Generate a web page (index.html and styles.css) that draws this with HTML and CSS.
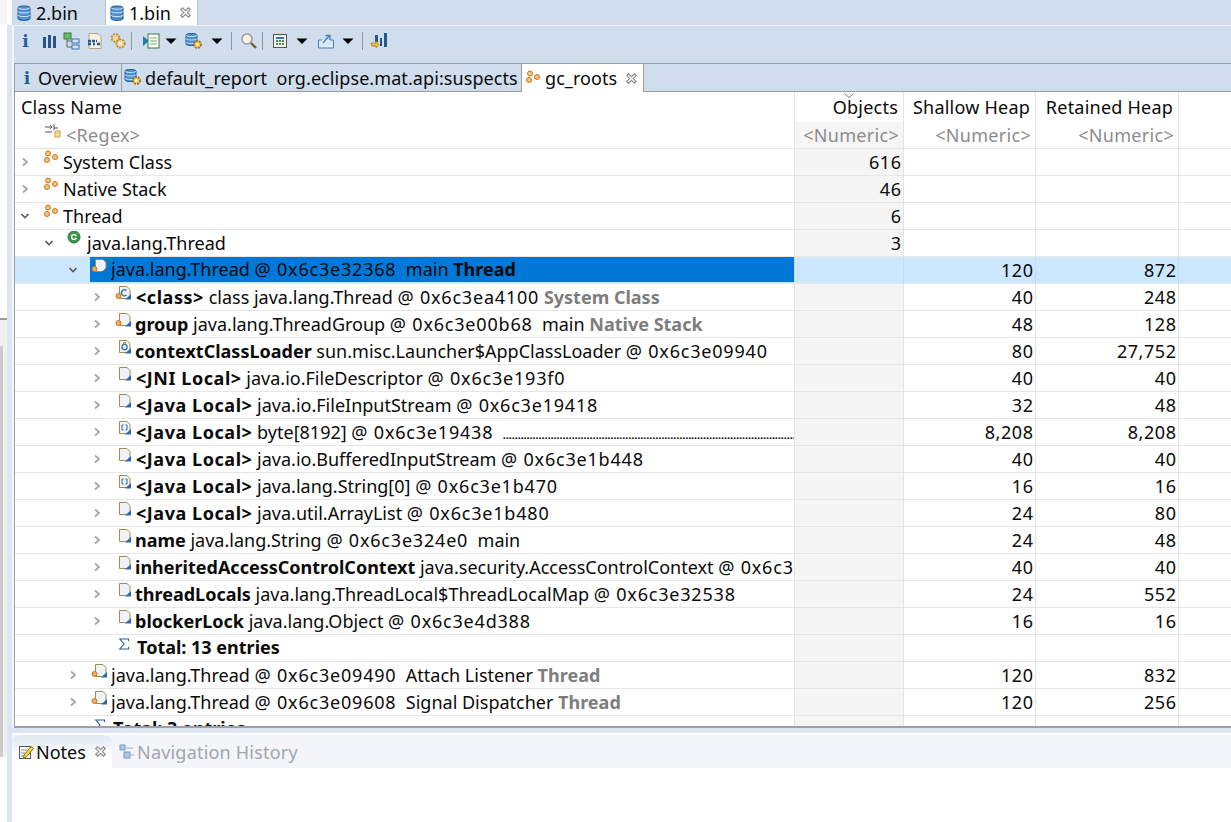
FILE: index.html
```html
<!DOCTYPE html>
<html lang="en">
<head>
<meta charset="utf-8">
<title>Memory Analyzer</title>
<link rel="stylesheet" href="styles.css">
</head>
<body>
<svg class="defs" width="0" height="0" aria-hidden="true">
  <defs>
    <symbol id="db" viewBox="0 0 14 18">
      <path d="M1 3.5C1 1.5 13 1.5 13 3.5V14.5C13 17 1 17 1 14.5Z" fill="#4a8fd6" stroke="#20598f"/>
      <path d="M1 3.5C1 5.8 13 5.8 13 3.5M1 7.2C1 9.5 13 9.5 13 7.2M1 10.9C1 13.2 13 13.2 13 10.9" fill="none" stroke="#d6e8f8"/>
    </symbol>
    <symbol id="dbgear" viewBox="0 0 18 18">
      <path d="M1 3C1 1 12 1 12 3V12C12 14 1 14 1 12Z" fill="#4a8fd6" stroke="#20598f"/>
      <path d="M1 3C1 5 12 5 12 3M1 6.5C1 8.5 12 8.5 12 6.5M1 10C1 12 12 12 12 10" fill="none" stroke="#d6e8f8"/>
      <circle cx="12.5" cy="12.5" r="3.6" fill="#f2c35a" stroke="#9a6a12" stroke-width="1.6" stroke-dasharray="2 1"/>
      <circle cx="12.5" cy="12.5" r="1.2" fill="#fff"/>
    </symbol>
    <symbol id="root" viewBox="0 0 18 18">
      <circle cx="5" cy="3.5" r="2.5" fill="#f6c27c" stroke="#c9761b"/>
      <circle cx="4" cy="10" r="2.5" fill="#f6c27c" stroke="#c9761b"/>
      <circle cx="12" cy="7" r="2.5" fill="#f6c27c" stroke="#c9761b"/>
    </symbol>
    <symbol id="page" viewBox="0 0 18 18">
      <path d="M4.5 1.5H12L15 4.5V13.5H4.5Z" fill="#eef2fa" stroke="#a68a4a"/>
      <path d="M10 14.5L16 9V14.5Z" fill="#2b6aa8"/>
    </symbol>
    <symbol id="pageroot" viewBox="0 0 18 18">
      <path d="M4.5 1.5H12L15 4.5V13.5H4.5Z" fill="#eef2fa" stroke="#a68a4a"/>
      <path d="M10 14.5L16 9V14.5Z" fill="#2b6aa8"/>
      <circle cx="3.5" cy="11" r="2.5" fill="#f6a95c" stroke="#c9761b"/>
    </symbol>
    <symbol id="pageclass" viewBox="0 0 18 18">
      <path d="M4.5 1.5H12L15 4.5V13.5H4.5Z" fill="#eef2fa" stroke="#a68a4a"/>
      <path d="M10 14.5L16 9V14.5Z" fill="#2b6aa8"/>
      <path d="M11.5 5.5A3 3 0 1 0 11.5 10" fill="none" stroke="#2b6aa8" stroke-width="1.3"/>
      <circle cx="3.5" cy="11" r="2.5" fill="#f6a95c" stroke="#c9761b"/>
    </symbol>
    <symbol id="pagearr" viewBox="0 0 18 18">
      <path d="M4.5 1.5H12L15 4.5V13.5H4.5Z" fill="#eef2fa" stroke="#a68a4a"/>
      <path d="M10 14.5L16 9V14.5Z" fill="#2b6aa8"/>
      <path d="M8.5 5H7V10H8.5M10.5 5H12V10H10.5" fill="none" stroke="#2b6aa8"/>
    </symbol>
    <symbol id="pageload" viewBox="0 0 18 18">
      <path d="M4.5 1.5H12L15 4.5V13.5H4.5Z" fill="#eef2fa" stroke="#a68a4a"/>
      <path d="M10 14.5L16 9V14.5Z" fill="#2b6aa8"/>
      <circle cx="9.5" cy="8" r="2.6" fill="none" stroke="#2b6aa8" stroke-width="1.2"/>
      <path d="M8.5 5.5V3.5H10.5V5.5" fill="none" stroke="#a68a4a"/>
    </symbol>
    <symbol id="gear" viewBox="0 0 18 18">
      <circle cx="6.5" cy="6" r="3.8" fill="#f4d79a" stroke="#b98a3a" stroke-width="1.8" stroke-dasharray="2 1"/>
      <circle cx="11.5" cy="11.5" r="4.2" fill="#f4d79a" stroke="#b98a3a" stroke-width="1.8" stroke-dasharray="2 1"/>
      <circle cx="11.5" cy="11.5" r="1.4" fill="#fff"/>
    </symbol>
    <symbol id="twr" viewBox="0 0 10 10"><path d="M3 1.5L7 5L3 8.5" fill="none" stroke="#a6a6a6" stroke-width="1.8"/></symbol>
    <symbol id="twd" viewBox="0 0 10 10"><path d="M1.5 3L5 6.7L8.5 3" fill="none" stroke="#555" stroke-width="1.6"/></symbol>
    <symbol id="close" viewBox="0 0 11 11"><path d="M1.5 3L3 1.5L5.5 4L8 1.5L9.5 3L7 5.5L9.5 8L8 9.5L5.5 7L3 9.5L1.5 8L4 5.5Z" fill="#fff" stroke="#8c8c8c"/></symbol>
    <symbol id="drop" viewBox="0 0 12 6"><path d="M0.5 0.5H11.5L6 6Z" fill="#000"/></symbol>
    <symbol id="sigma" viewBox="0 0 12 12"><path d="M10.5 3V1H1.8L6 6L1.8 11H10.5V9" fill="none" stroke="#2b5f94" stroke-width="1.1"/></symbol>
  </defs>
</svg>

<div class="app">
  <div class="side">
    <div class="side-top"></div>
    <div class="side-panel"></div>
  </div>
  <div class="edge"></div>
  <main class="main">
    <div class="tabbar">
      <div class="toptab"><svg class="tabicon"><use href="#db"/></svg><span>2.bin</span></div>
      <div class="toptab on"><svg class="tabicon"><use href="#db"/></svg><span>1.bin</span><svg class="closeicon"><use href="#close"/></svg></div>
    </div>

    <div class="editor">
      <div class="toolbar">
        <span class="tb info">i</span>
        <span class="tb"><svg viewBox="0 0 18 18"><path d="M3 5h3v11H3zM8 3h3v13H8zM13 4h3v12h-3z" fill="#26568a"/></svg></span>
        <span class="tb"><svg viewBox="0 0 18 18"><rect x="1" y="1" width="7" height="6" fill="#6dbb68" stroke="#3a7a3a"/><rect x="9" y="7" width="7" height="4" fill="#cfe3f7" stroke="#3a78b5"/><rect x="9" y="13" width="7" height="4" fill="#cfe3f7" stroke="#3a78b5"/><path d="M4 7v8h5M4 9h5" fill="none" stroke="#666"/></svg></span>
        <span class="tb"><svg viewBox="0 0 18 18"><path d="M3 1.5H12L15 4.5V16.5H3Z" fill="#f6f1e4" stroke="#b5a580"/><path d="M2 9H5M6 9H9M10 9H11M2 12H5M7 12H9M11 12H14" stroke="#26568a" stroke-width="2.4"/></svg></span>
        <span class="tb"><svg><use href="#gear"/></svg></span>
        <i class="sep s1"></i>
        <span class="tb w-a"><svg viewBox="0 0 18 18"><path d="M1 4L7 9L1 14Z" fill="#1f7fa8"/><rect x="6" y="2" width="11" height="14" fill="#fff" stroke="#3a7a3a"/><path d="M8 6h7M8 9h7M8 12h7" stroke="#7aa66a"/></svg></span>
        <svg class="dropicon d1"><use href="#drop"/></svg>
        <span class="tb w-b"><svg><use href="#dbgear"/></svg></span>
        <svg class="dropicon d2"><use href="#drop"/></svg>
        <i class="sep s2"></i>
        <span class="tb w-c"><svg viewBox="0 0 18 18"><circle cx="7" cy="7" r="5" fill="#fbf7e6" stroke="#999" stroke-width="1.5"/><path d="M11 11L16 16" stroke="#7a5a2a" stroke-width="2.4"/></svg></span>
        <i class="sep s3"></i>
        <span class="tb w-d"><svg viewBox="0 0 18 18"><rect x="2.5" y="2.5" width="13" height="13" fill="#eef2e2" stroke="#555"/><rect x="5" y="5" width="8" height="2" fill="#3a78b5"/><path d="M5 9h2M8 9h2M11 9h2M5 12h2M8 12h2M11 12h2" stroke="#3a6a3a" stroke-width="1.6"/></svg></span>
        <svg class="dropicon d3"><use href="#drop"/></svg>
        <span class="tb w-e"><svg viewBox="0 0 18 18"><path d="M5 8H1.5V16H16.5V8H13" fill="#dbe8f6" stroke="#4a80b8"/><path d="M6 11L12 4M8.5 3.5H13V8" fill="none" stroke="#4a80b8" stroke-width="1.3"/></svg></span>
        <svg class="dropicon d4"><use href="#drop"/></svg>
        <i class="sep s4"></i>
        <span class="tb w-f"><svg viewBox="0 0 18 18"><path d="M5 3h3v7H5zM10 6h2v8h-2zM14 1h3v14h-3z" fill="#26568a"/><path d="M1 11h5V9l3 3.5L6 16v-2H2Z" fill="#f0c040" stroke="#a07a10" stroke-width=".7"/></svg></span>
      </div>

      <div class="panel">
        <div class="edtabs">
          <div class="edtab t-over"><span class="info tabinfo">i</span><span>Overview</span></div>
          <div class="edtab t-rep"><svg class="tabicon2"><use href="#dbgear"/></svg><span>default_report&nbsp; org.eclipse.mat.api:suspects</span></div>
          <div class="edtab on t-gc"><svg class="tabicon3"><use href="#root"/></svg><span>gc_roots</span><svg class="closeicon"><use href="#close"/></svg></div>
        </div>

        <div class="table">
          <div class="row head">
            <div class="c name"><span class="hname">Class Name</span></div>
            <div class="c num"><svg class="sort" viewBox="0 0 10 5"><path d="M.5.5L5 4.5L9.5.5" fill="none" stroke="#777"/></svg>Objects</div>
            <div class="c num">Shallow Heap</div>
            <div class="c num">Retained Heap</div>
            <div class="c fill"></div>
          </div>
          <div class="row filter">
            <div class="c name"><svg class="regex" viewBox="0 0 18 18"><path d="M1 4H8M6 2L8 4L6 6M10 1V7M1 9H8M10 5L14 5" fill="none" stroke="#555"/><path d="M11 8H16V14H11Z" fill="#f3dca0" stroke="#c8a040"/></svg><span class="hint">&lt;Regex&gt;</span></div>
            <div class="c num obj hint">&lt;Numeric&gt;</div>
            <div class="c num hint">&lt;Numeric&gt;</div>
            <div class="c num hint">&lt;Numeric&gt;</div>
            <div class="c fill"></div>
          </div>

          <div class="row"><div class="c name l0"><svg class="tw"><use href="#twr"/></svg><div class="label"><svg class="ic"><use href="#root"/></svg><span class="txt">System Class</span></div></div><div class="c num obj val">616</div><div class="c num val"></div><div class="c num val"></div><div class="c fill"></div></div>
          <div class="row"><div class="c name l0"><svg class="tw"><use href="#twr"/></svg><div class="label"><svg class="ic"><use href="#root"/></svg><span class="txt">Native Stack</span></div></div><div class="c num obj val">46</div><div class="c num val"></div><div class="c num val"></div><div class="c fill"></div></div>
          <div class="row"><div class="c name l0"><svg class="tw"><use href="#twd"/></svg><div class="label"><svg class="ic"><use href="#root"/></svg><span class="txt">Thread</span></div></div><div class="c num obj val">6</div><div class="c num val"></div><div class="c num val"></div><div class="c fill"></div></div>
          <div class="row"><div class="c name l1"><svg class="tw"><use href="#twd"/></svg><div class="label"><svg class="ic" viewBox="0 0 18 18"><circle cx="7" cy="6" r="6" fill="#3a9a4a" stroke="#2a7a3a"/><circle cx="7" cy="6" r="2.4" fill="none" stroke="#fff" stroke-width="1.4"/><path d="M8.5 5h2.5v2H8.5Z" fill="#3a9a4a"/></svg><span class="txt">java.lang.Thread</span></div></div><div class="c num obj val">3</div><div class="c num val"></div><div class="c num val"></div><div class="c fill"></div></div>

          <div class="row sel"><div class="c name l2"><svg class="tw"><use href="#twd"/></svg><div class="label"><svg class="ic"><use href="#pageroot"/></svg><span class="txt">java.lang.Thread <span class="addr">@ 0x6c3e32368</span>&nbsp; main <b class="dk">Thread</b></span></div></div><div class="c num obj val"></div><div class="c num val">120</div><div class="c num val">872</div><div class="c fill"></div></div>

          <div class="row"><div class="c name l3"><svg class="tw"><use href="#twr"/></svg><div class="label"><svg class="ic"><use href="#pageclass"/></svg><span class="txt"><b class="ang">&lt;class&gt;</b> class java.lang.Thread <span class="addr">@ 0x6c3ea4100</span> <b class="gr">System Class</b></span></div></div><div class="c num obj val"></div><div class="c num val">40</div><div class="c num val">248</div><div class="c fill"></div></div>
          <div class="row"><div class="c name l3"><svg class="tw"><use href="#twr"/></svg><div class="label"><svg class="ic"><use href="#pageroot"/></svg><span class="txt"><b>group</b> java.lang.ThreadGroup <span class="addr">@ 0x6c3e00b68</span>&nbsp; main <b class="gr">Native Stack</b></span></div></div><div class="c num obj val"></div><div class="c num val">48</div><div class="c num val">128</div><div class="c fill"></div></div>
          <div class="row"><div class="c name l3"><svg class="tw"><use href="#twr"/></svg><div class="label"><svg class="ic"><use href="#pageload"/></svg><span class="txt"><b>contextClassLoader</b> sun.misc.Launcher$AppClassLoader <span class="addr">@ 0x6c3e09940</span></span></div></div><div class="c num obj val"></div><div class="c num val">80</div><div class="c num val">27,752</div><div class="c fill"></div></div>
          <div class="row"><div class="c name l3"><svg class="tw"><use href="#twr"/></svg><div class="label"><svg class="ic"><use href="#page"/></svg><span class="txt"><b class="ang">&lt;JNI Local&gt;</b> java.io.FileDescriptor <span class="addr">@ 0x6c3e193f0</span></span></div></div><div class="c num obj val"></div><div class="c num val">40</div><div class="c num val">40</div><div class="c fill"></div></div>
          <div class="row"><div class="c name l3"><svg class="tw"><use href="#twr"/></svg><div class="label"><svg class="ic"><use href="#page"/></svg><span class="txt"><b class="ang">&lt;Java Local&gt;</b> java.io.FileInputStream <span class="addr">@ 0x6c3e19418</span></span></div></div><div class="c num obj val"></div><div class="c num val">32</div><div class="c num val">48</div><div class="c fill"></div></div>
          <div class="row"><div class="c name l3"><svg class="tw"><use href="#twr"/></svg><div class="label"><svg class="ic"><use href="#pagearr"/></svg><span class="txt"><b class="ang">&lt;Java Local&gt;</b> byte[8192] <span class="addr">@ 0x6c3e19438</span>&nbsp; <span class="dots">....................................................................................................................................</span></span></div></div><div class="c num obj val"></div><div class="c num val">8,208</div><div class="c num val">8,208</div><div class="c fill"></div></div>
          <div class="row"><div class="c name l3"><svg class="tw"><use href="#twr"/></svg><div class="label"><svg class="ic"><use href="#page"/></svg><span class="txt"><b class="ang">&lt;Java Local&gt;</b> java.io.BufferedInputStream <span class="addr">@ 0x6c3e1b448</span></span></div></div><div class="c num obj val"></div><div class="c num val">40</div><div class="c num val">40</div><div class="c fill"></div></div>
          <div class="row"><div class="c name l3"><svg class="tw"><use href="#twr"/></svg><div class="label"><svg class="ic"><use href="#pagearr"/></svg><span class="txt"><b class="ang">&lt;Java Local&gt;</b> java.lang.String[0] <span class="addr">@ 0x6c3e1b470</span></span></div></div><div class="c num obj val"></div><div class="c num val">16</div><div class="c num val">16</div><div class="c fill"></div></div>
          <div class="row"><div class="c name l3"><svg class="tw"><use href="#twr"/></svg><div class="label"><svg class="ic"><use href="#page"/></svg><span class="txt"><b class="ang">&lt;Java Local&gt;</b> java.util.ArrayList <span class="addr">@ 0x6c3e1b480</span></span></div></div><div class="c num obj val"></div><div class="c num val">24</div><div class="c num val">80</div><div class="c fill"></div></div>
          <div class="row"><div class="c name l3"><svg class="tw"><use href="#twr"/></svg><div class="label"><svg class="ic"><use href="#page"/></svg><span class="txt"><b>name</b> java.lang.String <span class="addr">@ 0x6c3e324e0</span>&nbsp; main</span></div></div><div class="c num obj val"></div><div class="c num val">24</div><div class="c num val">48</div><div class="c fill"></div></div>
          <div class="row"><div class="c name l3"><svg class="tw"><use href="#twr"/></svg><div class="label"><svg class="ic"><use href="#page"/></svg><span class="txt"><b>inheritedAccessControlContext</b> java.security.AccessControlContext <span class="addr">@ 0x6c3e32580</span></span></div></div><div class="c num obj val"></div><div class="c num val">40</div><div class="c num val">40</div><div class="c fill"></div></div>
          <div class="row"><div class="c name l3"><svg class="tw"><use href="#twr"/></svg><div class="label"><svg class="ic"><use href="#page"/></svg><span class="txt"><b>threadLocals</b> java.lang.ThreadLocal$ThreadLocalMap <span class="addr">@ 0x6c3e32538</span></span></div></div><div class="c num obj val"></div><div class="c num val">24</div><div class="c num val">552</div><div class="c fill"></div></div>
          <div class="row"><div class="c name l3"><svg class="tw"><use href="#twr"/></svg><div class="label"><svg class="ic"><use href="#page"/></svg><span class="txt"><b>blockerLock</b> java.lang.Object <span class="addr">@ 0x6c3e4d388</span></span></div></div><div class="c num obj val"></div><div class="c num val">16</div><div class="c num val">16</div><div class="c fill"></div></div>
          <div class="row"><div class="c name l3"><span class="tw"></span><div class="label"><svg class="ic sg"><use href="#sigma"/></svg><span class="txt total"><b>Total: 13 entries</b></span></div></div><div class="c num obj val"></div><div class="c num val"></div><div class="c num val"></div><div class="c fill"></div></div>

          <div class="row"><div class="c name l2"><svg class="tw"><use href="#twr"/></svg><div class="label"><svg class="ic"><use href="#pageroot"/></svg><span class="txt">java.lang.Thread <span class="addr">@ 0x6c3e09490</span>&nbsp; Attach Listener <b class="gr">Thread</b></span></div></div><div class="c num obj val"></div><div class="c num val">120</div><div class="c num val">832</div><div class="c fill"></div></div>
          <div class="row"><div class="c name l2"><svg class="tw"><use href="#twr"/></svg><div class="label"><svg class="ic"><use href="#pageroot"/></svg><span class="txt">java.lang.Thread <span class="addr">@ 0x6c3e09608</span>&nbsp; Signal Dispatcher <b class="gr">Thread</b></span></div></div><div class="c num obj val"></div><div class="c num val">120</div><div class="c num val">256</div><div class="c fill"></div></div>
          <div class="row"><div class="c name l2"><span class="tw"></span><div class="label"><svg class="ic sg"><use href="#sigma"/></svg><span class="txt total"><b>Total: 3 entries</b></span></div></div><div class="c num obj val"></div><div class="c num val"></div><div class="c num val"></div><div class="c fill"></div></div>
        </div>
      </div>
    </div>

    <div class="gap"></div>
    <div class="notes">
      <div class="notetabs">
        <div class="notetab on"><svg class="noteicon" viewBox="0 0 16 16"><rect x="1.5" y="2.5" width="11" height="12" fill="#fff" stroke="#555"/><path d="M3 6h6M3 9h4M3 12h4" stroke="#888"/><path d="M6 11L13 2.5L15.5 4.5L8.5 13L5.5 14Z" fill="#f2d24a" stroke="#8a7410"/></svg><span>Notes</span><svg class="closeicon"><use href="#close"/></svg></div>
        <div class="notetab off"><svg class="noteicon" viewBox="0 0 16 16"><rect x="1" y="1" width="5" height="5" fill="#a8c8ea" stroke="#7a9ac0"/><rect x="5" y="8" width="6" height="6" fill="#a8c8ea" stroke="#7a9ac0"/><path d="M7 4h7M12 11h3" stroke="#aaa"/></svg><span>Navigation History</span></div>
      </div>
    </div>
  </main>
</div>
</body>
</html>
```
FILE: styles.css
```css
* { box-sizing: border-box; }
html, body { margin: 0; padding: 0; background: #fff; }
body {
  font-family: "Noto Sans", "Open Sans", sans-serif;
  font-size: 18px;
  color: #0a0a0a;
  overflow: hidden;
}
.defs { display: block; height: 0; }
.app { display: flex; width: 1231px; height: 822px; overflow: hidden; }

.side { width: 7px; flex: none; display: flex; flex-direction: column; }
.side-top { height: 318px; background: linear-gradient(#f5f5f5 0 24px, #fff 24px); }
.side-panel {
  height: 439px;
  border-top: 2px solid #9c9c9c;
  background:
    linear-gradient(#efefef 0 26px, transparent 26px),
    linear-gradient(to right, #ccc 3px, #f0f0f0 3px);
}
.edge { width: 5px; flex: none; background: linear-gradient(#fff 0 25px, #dde4f4 25px); }

.main { flex: 1; min-width: 0; display: flex; flex-direction: column; }

.tabbar {
  height: 25px;
  flex: none;
  background: #cfdded;
  display: flex;
  line-height: 24px;
}
.toptab { width: 93px; display: flex; align-items: center; padding-left: 5px; }
.toptab.on { background: #fff; border-right: 1px solid #b9c3cf; border-left: 1px solid #b9c3cf; padding-left: 4px; }
.tabicon { width: 14px; height: 18px; margin-right: 5px; flex: none; }
.closeicon { width: 13px; height: 13px; flex: none; margin-left: 8px; }

.editor {
  height: 703px;
  flex: none;
  border-left: 2px solid #f5f6f9;
  border-top: 1px solid #eef2f8;
  background: #cfdded;
  display: flex;
  flex-direction: column;
}

.toolbar {
  height: 37px;
  flex: none;
  display: flex;
  align-items: center;
  padding-bottom: 8px;
}
.tb { width: 23px; height: 18px; display: flex; justify-content: center; flex: none; }
.tb svg { width: 18px; height: 18px; }
.info { font-family: "DejaVu Serif", "Liberation Serif", serif; font-weight: 700; color: #1f5f9c; font-size: 17px; line-height: 18px; text-align: center; }
.sep { width: 1px; height: 18px; background: #8c96a3; flex: none; }
.dropicon { width: 12px; height: 6px; flex: none; }
.s1 { margin-left: 2px; }
.w-a { margin-left: 7px; }
.d1 { margin-left: 3px; }
.w-b { margin-left: 5px; }
.d2 { margin-left: 6px; }
.s2 { margin-left: 8px; }
.w-c { margin-left: 5px; }
.s3 { margin-left: 2px; }
.w-d { margin-left: 5px; }
.d3 { margin-left: 5px; }
.w-e { margin-left: 6px; }
.d4 { margin-left: 5px; }
.s4 { margin-left: 8px; }
.w-f { margin-left: 4px; }

.panel {
  flex: 1;
  min-height: 0;
  border-left: 1px solid #9c9c9c;
  border-top: 1px solid #9c9c9c;
  border-bottom: 2px solid #a0a0a0;
  background: #fff;
  display: flex;
  flex-direction: column;
  overflow: hidden;
}
.edtabs {
  height: 28px;
  flex: none;
  display: flex;
  background: #cfdded;
  border-bottom: 1px solid #9c9c9c;
  white-space: nowrap;
  letter-spacing: .08px;
}
.edtab { display: flex; align-items: center; height: 27px; border-right: 1px solid #9c9c9c; flex: none; }
.t-over { width: 107px; padding-left: 1px; }
.tabinfo { width: 22px; }
.t-rep { width: 400px; padding-left: 2px; }
.tabicon2 { width: 18px; height: 18px; margin: -2px 3px 0 0; flex: none; }
.t-gc { width: 122px; height: 28px; padding-left: 3px; background: #fff; border-left: 0; }
.tabicon3 { width: 18px; height: 18px; margin: 2px 2px 0 0; flex: none; }

.table { flex: 1; min-height: 0; overflow: hidden; }
.row {
  display: grid;
  grid-template-columns: 780px 109px 132px 143px 1fr;
  height: 27px;
  border-bottom: 1px solid #e6e6e6;
  white-space: nowrap;
}
.row.head { height: 30px; border-bottom: 0; letter-spacing: .22px; }
.c { min-width: 0; height: 100%; border-right: 1px solid #e4e4e4; display: flex; align-items: center; }
.c.fill { border-right: 0; }
.name { overflow: hidden; }
.hname { padding-left: 6px; }
.num { justify-content: flex-end; padding-right: 5px; position: relative; }
.val { padding-right: 1.5px; letter-spacing: .55px; }
.obj { background: #f5f5f5; }
.hint { color: #8c8c8c; letter-spacing: .3px; }
.num.hint { padding-right: 4px; }
.sort { position: absolute; left: 49px; top: 1px; width: 10px; height: 5px; }
.regex { width: 18px; height: 18px; margin: -6px 4px 0 29px; flex: none; }

.l0 { padding-left: 5px; }
.l1 { padding-left: 29px; }
.l2 { padding-left: 53px; }
.l3 { padding-left: 77px; }
.tw { display: block; width: 10px; height: 10px; flex: none; margin-right: 12px; }
.label { flex: 1; min-width: 0; display: flex; align-items: center; height: 25px; margin-top: -1px; overflow: hidden; }
.ic { width: 18px; height: 18px; flex: none; margin: -5px 2px 0 1px; }
.sg { width: 12px; height: 12px; margin: -8px 7px 0 4px; }
.txt { overflow: hidden; }
.total { margin-top: -1px; }
.addr { letter-spacing: .8px; }
.ang { letter-spacing: .55px; margin-left: 1px; }
.gr { color: #7d7d7d; }
.dk { color: #0a0a0a; }
.dots { font-size: 11px; font-weight: 700; letter-spacing: -.1px; }

.row.sel { background: #cce8ff; }
.row.sel .label { background: #0078d7; }
.row.sel .txt { margin-top: -2px; }
.row.sel .obj { background: transparent; }
.row.sel .c { border-right-color: #c0dcf2; }

.gap { height: 7px; flex: none; background: linear-gradient(#dde4f4 0 5px, #fff 5px); }

.notes { flex: 1; min-height: 0; background: #fff; }
.notetabs { height: 33px; background: #f3f5fb; display: flex; }
.notetab { display: flex; align-items: center; flex: none; }
.notetab.on {
  width: 100px;
  padding-left: 6px;
  border-radius: 8px 8px 0 0;
  background: linear-gradient(#dfe8f2, #fff 70%);
}
.notetab.off { padding-left: 7px; color: #a0a6ad; letter-spacing: .2px; }
.noteicon { width: 16px; height: 16px; margin-right: 2px; flex: none; }
```
